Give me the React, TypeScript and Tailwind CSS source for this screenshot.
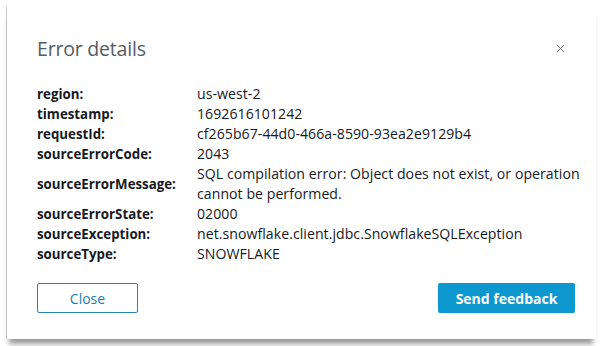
import { X } from 'lucide-react'

const ROWS: { label: string; value: string[] }[] = [
  { label: 'region:', value: ['us-west-2'] },
  { label: 'timestamp:', value: ['1692616101242'] },
  { label: 'requestId:', value: ['cf265b67-44d0-466a-8590-93ea2e9129b4'] },
  { label: 'sourceErrorCode:', value: ['2043'] },
  {
    label: 'sourceErrorMessage:',
    value: ['SQL compilation error: Object does not exist, or operation', 'cannot be performed.'],
  },
  { label: 'sourceErrorState:', value: ['02000'] },
  { label: 'sourceException:', value: ['net.snowflake.client.jdbc.SnowflakeSQLException'] },
  { label: 'sourceType:', value: ['SNOWFLAKE'] },
]

export default function App() {
  return (
    <div className="w-[612px] h-[346px] bg-white overflow-hidden font-['Open_Sans',sans-serif]">
      <div className="ml-[6px] mt-[7px] w-[590px] h-[332px] bg-white border-l border-[#c6c6c6] shadow-[0_8px_5px_-3px_rgba(0,0,0,0.4)] flex flex-col">
        {/* Header */}
        <div className="flex items-center justify-between pl-[30px] pr-[29px] pt-[22px] h-[62px]">
          <h2 className="text-[19.5px] leading-none text-[#545b64] tracking-[-0.2px]">Error details</h2>
          <button aria-label="Close" className="text-[#545b64] -mt-[1px]">
            <X size={13} strokeWidth={1.6} />
          </button>
        </div>

        {/* Details */}
        <div className="pl-[30px] pt-[15px] flex flex-col leading-[20px] text-[#16191f]">
          {ROWS.map(row => (
            <div key={row.label} className="flex items-center">
              <div className="w-[160px] font-bold text-[13.3px]">{row.label}</div>
              <div className="flex flex-col text-[14.1px] tracking-[0.05px]">
                {row.value.map(v => (
                  <span key={v}>{v}</span>
                ))}
              </div>
            </div>
          ))}
        </div>

        {/* Footer */}
        <div className="flex items-center justify-between pl-[30px] pr-[21px] mt-[19px]">
          <button className="w-[101px] h-[30px] border border-[#2a83b1] rounded-[2px] text-[#1a7db0] text-[14px]">
            Close
          </button>
          <button className="w-[137px] h-[30px] rounded-[2px] bg-[#0d97cf] text-white text-[14px] font-bold">
            Send feedback
          </button>
        </div>
      </div>
    </div>
  )
}
